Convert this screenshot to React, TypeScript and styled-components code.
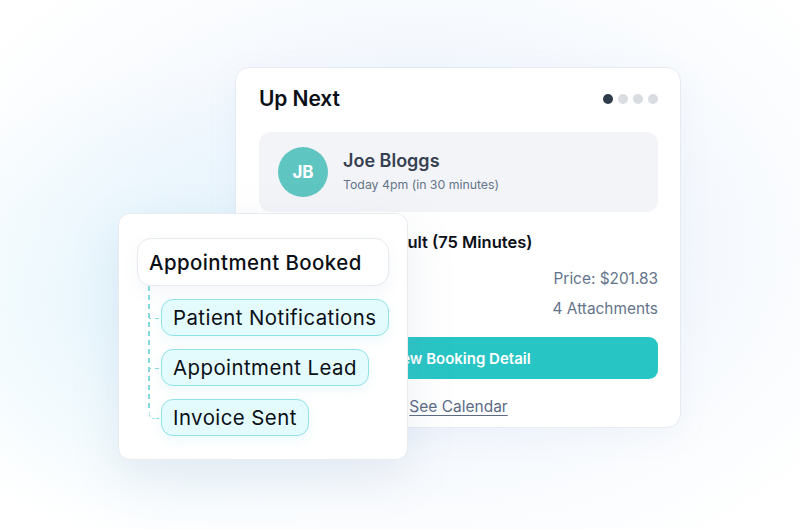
import styled, { createGlobalStyle } from 'styled-components';

const GlobalStyle = createGlobalStyle`
  html, body {
    margin: 0;
    padding: 0;
  }

  body {
    font-family: Inter, "Noto Sans", "Liberation Sans", sans-serif;
    color: #111827;
  }
`;

const Stage = styled.div`
  position: relative;
  width: 800px;
  height: 529px;
  overflow: hidden;
  box-sizing: border-box;
  padding: 67px 0 0 235px;
  background:
    radial-gradient(ellipse 300px 240px at 22% 58%, rgba(222, 245, 253, 0.7), rgba(222, 245, 253, 0) 100%),
    radial-gradient(ellipse 520px 360px at 52% 46%, #eaf2fc 0%, #f1f6fd 45%, #fafcfe 75%, #ffffff 100%);
`;

const BookingCard = styled.section`
  width: 446px;
  box-sizing: border-box;
  padding: 19px 22px 8px 23px;
  background: #ffffff;
  border: 1px solid #e6ebf1;
  border-radius: 14px;
  box-shadow: 0 8px 30px rgba(148, 170, 200, 0.08);
`;

const Header = styled.div`
  display: flex;
  align-items: center;
  justify-content: space-between;
`;

const Title = styled.h1`
  margin: 0;
  font-size: 21px;
  line-height: 24px;
  font-weight: 600;
  color: #0b0f17;
  letter-spacing: -0.1px;
`;

const Pager = styled.div`
  display: flex;
  gap: 5px;
`;

const Dot = styled.span<{ $active?: boolean }>`
  width: 10px;
  height: 10px;
  border-radius: 50%;
  background: ${(p) => (p.$active ? '#2f3a4b' : '#d9dce1')};
`;

const PatientBox = styled.div`
  margin-top: 21px;
  height: 80px;
  display: flex;
  align-items: center;
  gap: 15px;
  padding: 0 19px;
  background: #f3f4f7;
  border-radius: 12px;
`;

const Avatar = styled.div`
  width: 50px;
  height: 50px;
  border-radius: 50%;
  background: #5fc5c1;
  color: #ffffff;
  display: flex;
  align-items: center;
  justify-content: center;
  font-size: 17px;
  font-weight: 700;
`;

const PatientInfo = styled.div`
  display: flex;
  flex-direction: column;
  gap: 5px;
  margin-top: -1px;
`;

const PatientName = styled.div`
  font-size: 18px;
  line-height: 22px;
  font-weight: 600;
  color: #374151;
`;

const PatientTime = styled.div`
  font-size: 12.3px;
  line-height: 16px;
  color: #64748b;
`;

const Service = styled.div`
  margin-top: 18px;
  font-size: 16.5px;
  line-height: 24px;
  font-weight: 600;
  color: #0b0f17;
`;

const DetailRow = styled.div<{ $gap: number }>`
  margin-top: ${(p) => p.$gap}px;
  text-align: right;
  font-size: 15.4px;
  line-height: 24px;
  color: #64748b;
`;

const PrimaryButton = styled.button`
  margin-top: 16px;
  width: 100%;
  height: 42px;
  border: none;
  border-radius: 9px;
  background: #28c5c5;
  color: #ffffff;
  font-family: inherit;
  font-size: 15px;
  font-weight: 600;
`;

const CalendarLink = styled.a`
  display: block;
  margin-top: 16px;
  text-align: center;
  font-size: 15.5px;
  line-height: 24px;
  color: #5b6a85;
  text-decoration: underline;
  text-underline-offset: 3px;
`;

const FlowCard = styled.div`
  position: absolute;
  left: 118px;
  top: 213px;
  width: 290px;
  box-sizing: border-box;
  padding: 24px 18px 23px 18px;
  background: #ffffff;
  border: 1px solid #e8ecf1;
  border-radius: 12px;
  box-shadow: 0 16px 48px rgba(120, 140, 170, 0.15);
`;

const RootPill = styled.div`
  height: 48px;
  box-sizing: border-box;
  display: flex;
  align-items: center;
  padding: 0 11px;
  background: #ffffff;
  border: 1px solid #e6e9ee;
  border-radius: 14px;
  box-shadow: 0 6px 16px rgba(120, 140, 170, 0.08);
  font-size: 20.4px;
  letter-spacing: 0.45px;
  font-weight: 500;
  color: #0b0f17;
`;

const Branches = styled.div`
  position: relative;
  margin-top: 13px;
  padding-left: 24px;
  display: flex;
  flex-direction: column;
  align-items: flex-start;
  gap: 13px;

  &::before {
    content: '';
    position: absolute;
    left: 11px;
    top: -13px;
    bottom: 24px;
    width: 1.5px;
    background: repeating-linear-gradient(to bottom, #82dade 0 5px, transparent 5px 9px);
  }
`;

const BranchPill = styled.div<{ $last?: boolean }>`
  position: relative;
  height: 37px;
  box-sizing: border-box;
  display: flex;
  align-items: center;
  padding: 0 11px;
  background: #e4fbfd;
  border: 1px solid #8fe2e9;
  border-radius: 12px;
  box-shadow: 0 4px 12px rgba(95, 200, 210, 0.12);
  font-size: 20.4px;
  letter-spacing: 0.45px;
  font-weight: 400;
  color: #0b0f17;

  &::before {
    content: '';
    position: absolute;
    left: -13px;
    box-sizing: border-box;
    ${(p) =>
      p.$last
        ? `
      top: calc(50% - 6px);
      width: 11px;
      height: 7px;
      border-left: 1.5px dashed #82dade;
      border-bottom: 1.5px dashed #82dade;
      border-bottom-left-radius: 5px;
    `
        : `
      top: 50%;
      width: 12px;
      height: 1.5px;
      background: linear-gradient(to right, #82dade 0 2px, transparent 2px 6px, #82dade 6px 10px, transparent 10px);
    `}
  }
`;

export default function App() {
  return (
    <>
      <GlobalStyle />
      <Stage>
        <BookingCard>
          <Header>
            <Title>Up Next</Title>
            <Pager>
              <Dot $active />
              <Dot />
              <Dot />
              <Dot />
            </Pager>
          </Header>
          <PatientBox>
            <Avatar>JB</Avatar>
            <PatientInfo>
              <PatientName>Joe Bloggs</PatientName>
              <PatientTime>Today 4pm (in 30 minutes)</PatientTime>
            </PatientInfo>
          </PatientBox>
          <Service>Initial Patient Consult (75 Minutes)</Service>
          <DetailRow $gap={13}>Price: $201.83</DetailRow>
          <DetailRow $gap={6}>4 Attachments</DetailRow>
          <PrimaryButton>View Booking Detail</PrimaryButton>
          <CalendarLink href="#">See Calendar</CalendarLink>
        </BookingCard>

        <FlowCard>
          <RootPill>Appointment Booked</RootPill>
          <Branches>
            <BranchPill>Patient Notifications</BranchPill>
            <BranchPill>Appointment Lead</BranchPill>
            <BranchPill $last>Invoice Sent</BranchPill>
          </Branches>
        </FlowCard>
      </Stage>
    </>
  );
}
